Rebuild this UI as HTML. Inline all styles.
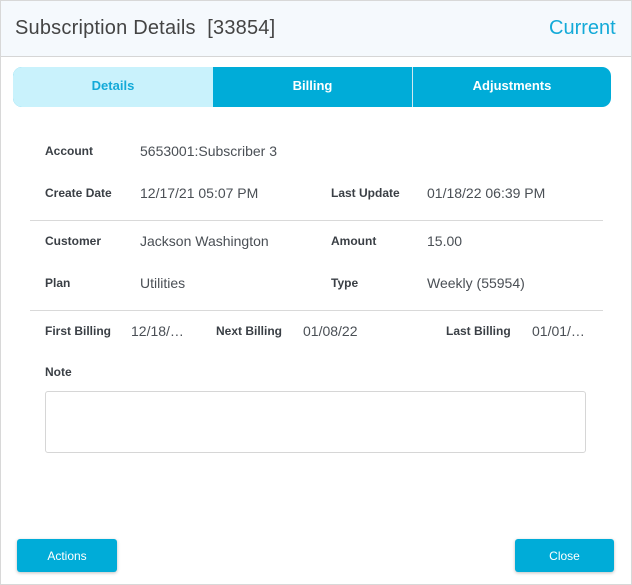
<!DOCTYPE html>
<html><head><style>
body{margin:0;width:632px;height:585px;overflow:hidden;background:#fff;font-family:"Liberation Sans",sans-serif;position:relative}
.dlg{position:absolute;left:0;top:0;width:630px;height:583px;border:1px solid #d8d8d8;background:#fff}
.hdr{position:absolute;left:0;top:0;width:630px;height:55px;background:#f5f9fd;border-bottom:1px solid #d6d6d6}
.t{position:absolute;white-space:nowrap}
.lb{position:absolute;font-size:12px;font-weight:bold;color:#3a3f45;white-space:nowrap}
.v{position:absolute;font-size:14px;color:#4a4f55;white-space:nowrap}
.hr{position:absolute;left:29px;width:573px;height:1px;background:#d9d9d9}
.btn{position:absolute;height:33px;background:#00acd8;border-radius:3px;color:#fff;font-size:12px;text-align:center;line-height:35px;box-shadow:0 1px 3px rgba(0,0,0,.25)}
</style></head><body>
<div class="dlg">
<div class="hdr"></div>
<div class="t" style="left:14px;top:16px;font-size:20px;color:#444;letter-spacing:0.2px">Subscription Details&nbsp; [33854]</div>
<div class="t" style="left:548px;top:16px;font-size:20px;color:#14aad8">Current</div>
<div style="position:absolute;left:12px;top:66px;width:598px;height:40px;border-radius:9px;overflow:hidden;background:#00acd8">
 <div style="position:absolute;left:0;top:0;width:200px;height:40px;background:#c9f2fc;color:#14aad8;font-weight:bold;font-size:13px;text-align:center;line-height:38px">Details</div>
 <div style="position:absolute;left:200px;top:0;width:199px;height:40px;color:#fff;font-weight:bold;font-size:13px;text-align:center;line-height:38px">Billing</div>
 <div style="position:absolute;left:399px;top:0;width:1px;height:40px;background:#d0e8f0"></div>
 <div style="position:absolute;left:400px;top:0;width:198px;height:40px;color:#fff;font-weight:bold;font-size:13px;text-align:center;line-height:38px">Adjustments</div>
</div>
<div class="lb" style="left:44px;top:143px">Account</div><div class="v" style="left:139px;top:142px">5653001:Subscriber 3</div>
<div class="lb" style="left:44px;top:185px">Create Date</div><div class="v" style="left:139px;top:184px">12/17/21 05:07 PM</div>
<div class="lb" style="left:330px;top:185px">Last Update</div><div class="v" style="left:426px;top:184px">01/18/22 06:39 PM</div>
<div class="hr" style="top:219px"></div>
<div class="lb" style="left:44px;top:233px">Customer</div><div class="v" style="left:139px;top:232px">Jackson Washington</div>
<div class="lb" style="left:330px;top:233px">Amount</div><div class="v" style="left:426px;top:232px">15.00</div>
<div class="lb" style="left:44px;top:275px">Plan</div><div class="v" style="left:139px;top:274px">Utilities</div>
<div class="lb" style="left:330px;top:275px">Type</div><div class="v" style="left:426px;top:274px">Weekly (55954)</div>
<div class="hr" style="top:309px"></div>
<div class="lb" style="left:44px;top:323px">First Billing</div><div class="v" style="left:130px;top:322px">12/18/…</div>
<div class="lb" style="left:215px;top:323px">Next Billing</div><div class="v" style="left:302px;top:322px">01/08/22</div>
<div class="lb" style="left:445px;top:323px">Last Billing</div><div class="v" style="left:531px;top:322px">01/01/…</div>
<div class="lb" style="left:44px;top:364px">Note</div>
<div style="position:absolute;left:44px;top:390px;width:539px;height:60px;border:1px solid #d6d6d6;border-radius:3px"></div>
<div class="btn" style="left:16px;top:538px;width:100px">Actions</div>
<div class="btn" style="left:514px;top:538px;width:99px">Close</div>
</div>
</body></html>
